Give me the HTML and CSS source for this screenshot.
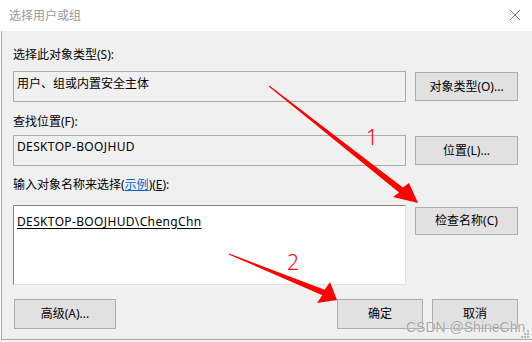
FILE: index.html
```html
<!DOCTYPE html>
<html lang="zh-CN">
<head>
<meta charset="utf-8">
<title>选择用户或组</title>
<link rel="stylesheet" href="styles.css">
</head>
<body>
<div class="window">
  <div class="titlebar">
    <span class="title">选择用户或组</span>
    <svg class="close" width="12" height="12" viewBox="0 0 12 12"><path d="M1 1L11 11M11 1L1 11" stroke="#777" stroke-width="1" fill="none"/></svg>
  </div>
  <div class="content">
    <div class="label l1">选择此对象类型(S):</div>
    <div class="row r1">
      <div class="field ro">用户、组或内置安全主体</div>
      <button class="btn side">对象类型(O)...</button>
    </div>
    <div class="label l2">查找位置(F):</div>
    <div class="row r2">
      <div class="field ro f2 latin">DESKTOP-BOOJHUD</div>
      <button class="btn side">位置(L)...</button>
    </div>
    <div class="label l3">输入对象名称来选择(<span class="link">示例</span>)(<u>E</u>):</div>
    <div class="row r3">
      <div class="field edit latin"><u>DESKTOP-BOOJHUD\ChengChn</u></div>
      <button class="btn side check">检查名称(C)</button>
    </div>
    <div class="bottom">
      <button class="btn adv">高级(A)...</button>
      <div class="spacer"></div>
      <button class="btn ok">确定</button>
      <button class="btn ok">取消</button>
    </div>
  </div>
</div>
<div class="strip"></div>
<svg class="arrows" width="532" height="342" viewBox="0 0 532 342">
  <polygon fill="#ff0000" points="269.3,85.6 402.9,187.6 409,183 418,203 393,197 399.1,192.4 268.7,86.4"/>
  <polygon fill="#ff0000" points="229.2,253.5 324.7,289.7 330,282 337,300 317,303 322.3,295.3 228.8,254.5"/>
  <text x="366" y="145" class="num">1</text>
  <text x="287" y="270" class="num">2</text>
</svg>
<svg class="grip" width="12" height="12" viewBox="0 0 12 12">
  <rect x="8" y="0" width="2" height="2" fill="#b4b4b4"/>
  <rect x="5" y="3" width="2" height="2" fill="#b4b4b4"/>
  <rect x="8" y="3" width="2" height="2" fill="#b4b4b4"/>
  <rect x="2" y="6" width="2" height="2" fill="#b4b4b4"/>
  <rect x="5" y="6" width="2" height="2" fill="#b4b4b4"/>
  <rect x="8" y="6" width="2" height="2" fill="#b4b4b4"/>
</svg>
<div class="watermark">CSDN @ShineChn</div>
</body>
</html>
```

FILE: styles.css
```css
* { box-sizing: border-box; }
html, body {
  margin: 0;
  padding: 0;
}
body {
  width: 532px;
  height: 342px;
  position: relative;
  overflow: hidden;
  background: #ffffff;
  font-family: "Noto Sans", "Noto Sans CJK SC", sans-serif;
  font-size: 12px;
  color: #000;
}
.window {
  width: 532px;
  display: flex;
  flex-direction: column;
}
.titlebar {
  height: 31px;
  background: #ffffff;
  display: flex;
  align-items: center;
  padding-left: 9px;
  padding-right: 11px;
  justify-content: space-between;
}
.title {
  color: #999;
  font-size: 12px;
  line-height: 16px;
  margin-top: 1px;
}
.close {
  display: block;
  margin-top: -1px;
}
.content {
  margin-left: 1px;
  border-left: 1px solid #a8a8a8;
  border-bottom: 1px solid #a8a8a8;
  background: #f0f0f0;
  height: 309px;
  padding: 0 14px 0 11px;
  display: flex;
  flex-direction: column;
}
.label {
  line-height: 16px;
  height: 16px;
  white-space: nowrap;
}
.l1 { margin-top: 16px; }
.l2 { margin-top: 12px; }
.l3 { margin-top: 11px; }
.row {
  display: flex;
  gap: 9px;
}
.r1 { margin-top: 8px; align-items: center; }
.r2 { margin-top: 5px; align-items: center; }
.r3 { margin-top: 12px; align-items: flex-start; }
.field {
  width: 393px;
  line-height: 16px;
  white-space: nowrap;
}
.latin { letter-spacing: 0.35px; }
.ro {
  height: 31px;
  border: 1px solid #acacac;
  background: #f0f0f0;
  padding: 4px 3px;
}
.f2 { padding-top: 3px; }
.edit {
  height: 80px;
  background: #ffffff;
  border-top: 1px solid #828282;
  border-left: 1px solid #828282;
  border-right: 1px solid #e3e3e3;
  border-bottom: 1px solid #e3e3e3;
  padding: 8px 3px;
}
.edit u { text-underline-offset: 2px; }
.link {
  color: #0066cc;
  text-decoration: underline;
}
.btn {
  font-family: inherit;
  font-size: 12px;
  color: #000;
  background: #e1e1e1;
  border: 1px solid #adadad;
  padding: 0;
  margin: 0;
  line-height: 16px;
  border-radius: 0;
}
.side {
  width: 103px;
  height: 29px;
}
.check {
  margin-top: 2px;
  height: 28px;
}
.bottom {
  display: flex;
  margin-top: 14px;
  gap: 9px;
}
.adv {
  width: 102px;
  height: 30px;
  margin-left: 1px;
}
.spacer { flex: 1; }
.ok {
  width: 86px;
  height: 30px;
  line-height: 12px;
}
.strip {
  height: 2px;
  background: #f4f4f4;
}
.arrows {
  position: absolute;
  left: 0;
  top: 0;
  pointer-events: none;
}
.num {
  fill: #ff0000;
  font-family: "Noto Sans", sans-serif;
  font-size: 21px;
  font-weight: 300;
}
.grip {
  position: absolute;
  left: 519px;
  top: 330px;
}
.watermark {
  position: absolute;
  left: 406px;
  top: 320px;
  font-family: "Liberation Sans", sans-serif;
  font-size: 14px;
  line-height: 14px;
  color: rgba(150, 150, 150, 0.85);
  text-shadow: 0 0 1px #fff;
  white-space: nowrap;
}
```
